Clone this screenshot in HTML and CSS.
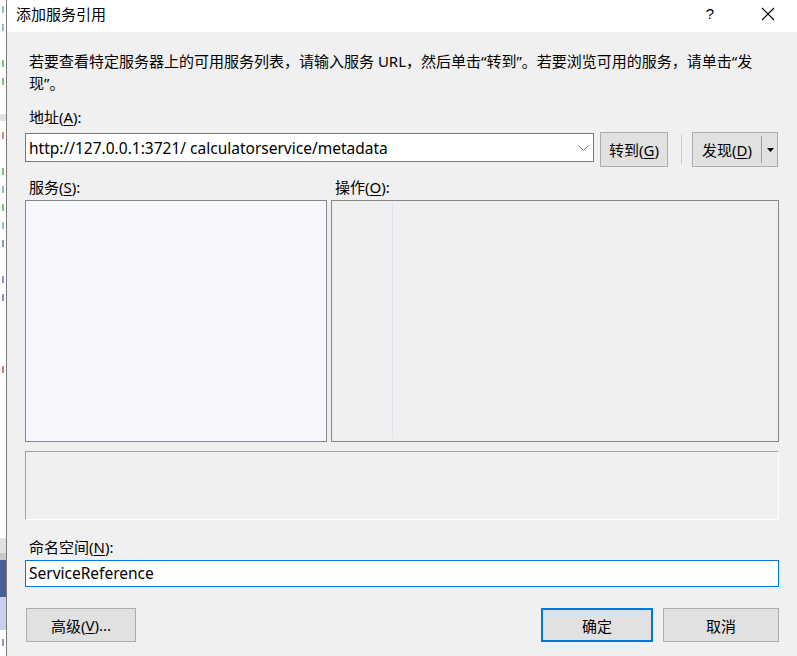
FILE: index.html
```html
<!DOCTYPE html>
<html lang="zh-CN">
<head>
    <meta charset="UTF-8">
    <title>添加服务引用</title>
    <link rel="stylesheet" href="styles.css">
</head>
<body>
    <div class="editor-strip">
        <div class="code-area">
            <i class="mark teal"></i>
            <i class="mark teal"></i>
            <i class="mark"></i>
            <i class="mark green"></i>
            <i class="mark green"></i>
            <i class="mark"></i>
            <i class="mark sel"></i>
            <i class="mark brown"></i>
            <i class="mark"></i>
            <i class="mark green"></i>
            <i class="mark teal"></i>
            <i class="mark green"></i>
            <i class="mark teal"></i>
            <i class="mark navy"></i>
            <i class="mark"></i>
            <i class="mark navy"></i>
            <i class="mark navy"></i>
            <i class="mark"></i>
            <i class="mark"></i>
            <i class="mark"></i>
            <i class="mark red"></i>
        </div>
        <div class="bar bar1"></div>
        <div class="bar bar2"></div>
        <div class="bar bar3"></div>
        <div class="bar bar4"></div>
        <div class="bar bar5"><i class="mark navy"></i></div>
    </div>

    <div class="dialog">
        <div class="titlebar">
            <span class="title">添加服务引用</span>
            <span class="help">?</span>
            <svg class="close" width="14" height="14" viewBox="0 0 14 14">
                <path d="M1 1 L13 13 M13 1 L1 13" stroke="#000" stroke-width="1.1" fill="none"/>
            </svg>
        </div>

        <div class="content">
            <p class="intro">若要查看特定服务器上的可用服务列表，请输入服务 URL，然后单击“转到”。若要浏览可用的服务，请单击“发现”。</p>

            <div class="label">地址(<u>A</u>):</div>
            <div class="address-row">
                <div class="combo">
                    <span class="combo-text">http://127.0.0.1:3721/ calculatorservice/metadata</span>
                    <svg class="chevron" width="11" height="7" viewBox="0 0 11 7">
                        <polyline points="0.5,0.5 5.5,5.5 10.5,0.5" stroke="#777" stroke-width="1" fill="none"/>
                    </svg>
                </div>
                <button class="btn goto">转到(<u>G</u>)</button>
                <div class="vsep"></div>
                <div class="btn split">
                    <span class="split-main">发现(<u>D</u>)</span>
                    <span class="split-line"></span>
                    <svg class="split-arrow" width="7" height="4" viewBox="0 0 7 4">
                        <polygon points="0,0 7,0 3.5,4" fill="#000"/>
                    </svg>
                </div>
            </div>

            <div class="panes">
                <div class="pane-col services">
                    <div class="label">服务(<u>S</u>):</div>
                    <div class="list-box"></div>
                </div>
                <div class="pane-col operations">
                    <div class="label">操作(<u>O</u>):</div>
                    <div class="ops-box">
                        <div class="ops-line"></div>
                    </div>
                </div>
            </div>

            <div class="status-box"></div>

            <div class="label ns-label">命名空间(<u>N</u>):</div>
            <div class="ns-input">ServiceReference</div>

            <div class="footer">
                <button class="btn advanced">高级(<u>V</u>)...</button>
                <div class="spacer"></div>
                <button class="btn ok">确定</button>
                <button class="btn cancel">取消</button>
            </div>
        </div>
    </div>
</body>
</html>
```

FILE: styles.css
```css
html, body {
    margin: 0;
    padding: 0;
}

body {
    width: 797px;
    height: 656px;
    overflow: hidden;
    display: flex;
    font-family: "Noto Sans", "Noto Sans CJK SC", sans-serif;
    font-size: 15px;
    color: #000;
    background: #fff;
}

u {
    text-decoration-thickness: 1px;
    text-underline-offset: 2px;
}

/* editor peeking out behind the dialog */
.editor-strip {
    width: 6px;
    flex: none;
    overflow: hidden;
    border-right: 1px solid #7a7a7a;
    background: #fff;
    display: flex;
    flex-direction: column;
}

.code-area {
    height: 538px;
    display: flex;
    flex-direction: column;
    padding-top: 6px;
    box-sizing: border-box;
}

.mark {
    display: block;
    width: 2px;
    height: 7px;
    margin: 0 0 11px 2px;
}

.teal { background: #8cc0d6; }
.green { background: #7fbf7f; }
.brown { background: #c89080; }
.navy { background: #8a96c0; }
.red { background: #d08080; }
.sel { background: #e2e2e2; width: 6px; margin-left: 0; }

.bar { flex: none; }
.bar1 { height: 15px; background: #e0e0e0; }
.bar2 { height: 7px; background: #c8c8c8; }
.bar3 { height: 37px; background: #4a5d95; }
.bar4 { height: 33px; background: #c7cfeb; }
.bar5 { height: 26px; background: #fff; padding-top: 9px; box-sizing: border-box; }

.dialog {
    flex: 1;
    display: flex;
    flex-direction: column;
    background: #f0f0f0;
}

.titlebar {
    height: 32px;
    flex: none;
    background: #fff;
    display: flex;
    align-items: center;
    padding-left: 9px;
}

.title {
    flex: 1;
    margin-top: -6px;
}

.help {
    font-family: "Liberation Sans", sans-serif;
    font-size: 15px;
    margin-right: 47px;
    margin-top: -6px;
}

.close {
    margin-right: 22px;
    margin-top: -5px;
}

.content {
    flex: 1;
    display: flex;
    flex-direction: column;
    padding: 18px 18px 0 18px;
}

.intro {
    margin: 0 0 12px 0;
    padding-left: 4px;
    line-height: 22px;
}

.label {
    padding-left: 4px;
    line-height: 22px;
    height: 22px;
}

.address-row {
    display: flex;
    align-items: flex-start;
    margin-top: 4px;
}

.combo {
    width: 564px;
    height: 27px;
    margin-top: 1px;
    border: 1px solid #7a7a7a;
    background: #fff;
    display: flex;
    align-items: center;
    padding-left: 3px;
}

.combo-text {
    flex: 1;
    font-size: 15.5px;
    white-space: nowrap;
}

.chevron {
    margin-right: 4px;
    margin-top: 1px;
}

.btn {
    font-family: inherit;
    font-size: 15px;
    color: #000;
    background: #e1e1e1;
    border: 1px solid #adadad;
    padding: 0;
    box-sizing: border-box;
    display: flex;
    align-items: center;
    justify-content: center;
}

.goto {
    width: 68px;
    height: 35px;
    margin-left: 6px;
}

.vsep {
    width: 1px;
    height: 29px;
    margin: 3px 10px 0 13px;
    background: #c8c8c8;
}

.split {
    width: 86px;
    height: 35px;
    justify-content: flex-start;
}

.split-main {
    width: 68px;
    text-align: center;
}

.split-line {
    width: 1px;
    height: 27px;
    background: #a0a0a0;
}

.split-arrow {
    margin-left: 5px;
}

.panes {
    display: flex;
    gap: 4px;
    margin-top: 9px;
}

.pane-col {
    display: flex;
    flex-direction: column;
    gap: 2px;
}

.services {
    width: 302px;
}

.operations {
    flex: 1;
}

.list-box {
    height: 240px;
    border: 1px solid #828790;
    background: #f6f8fd;
}

.ops-box {
    height: 235px;
    border: 1px solid #828790;
    background: #f0f0f0;
    display: flex;
    padding: 2px 0 3px 60px;
}

.ops-line {
    width: 1px;
    background: #dce5f4;
}

.status-box {
    height: 67px;
    margin-top: 9px;
    border: 1px solid;
    border-color: #a0a0a0 #fff #fff #a0a0a0;
    background: #f0f0f0;
}

.ns-label {
    margin-top: 16px;
}

.ns-input {
    height: 25px;
    margin-top: 2px;
    border: 1px solid #0078d7;
    background: #fff;
    padding-left: 3px;
    line-height: 25px;
    font-size: 15.5px;
}

.footer {
    display: flex;
    gap: 10px;
    margin-top: 21px;
}

.spacer {
    flex: 1;
}

.advanced {
    width: 110px;
    height: 34px;
    margin-left: 1px;
}

.ok {
    width: 112px;
    height: 34px;
    border: 2px solid #0078d7;
}

.cancel {
    width: 116px;
    height: 34px;
}
```
